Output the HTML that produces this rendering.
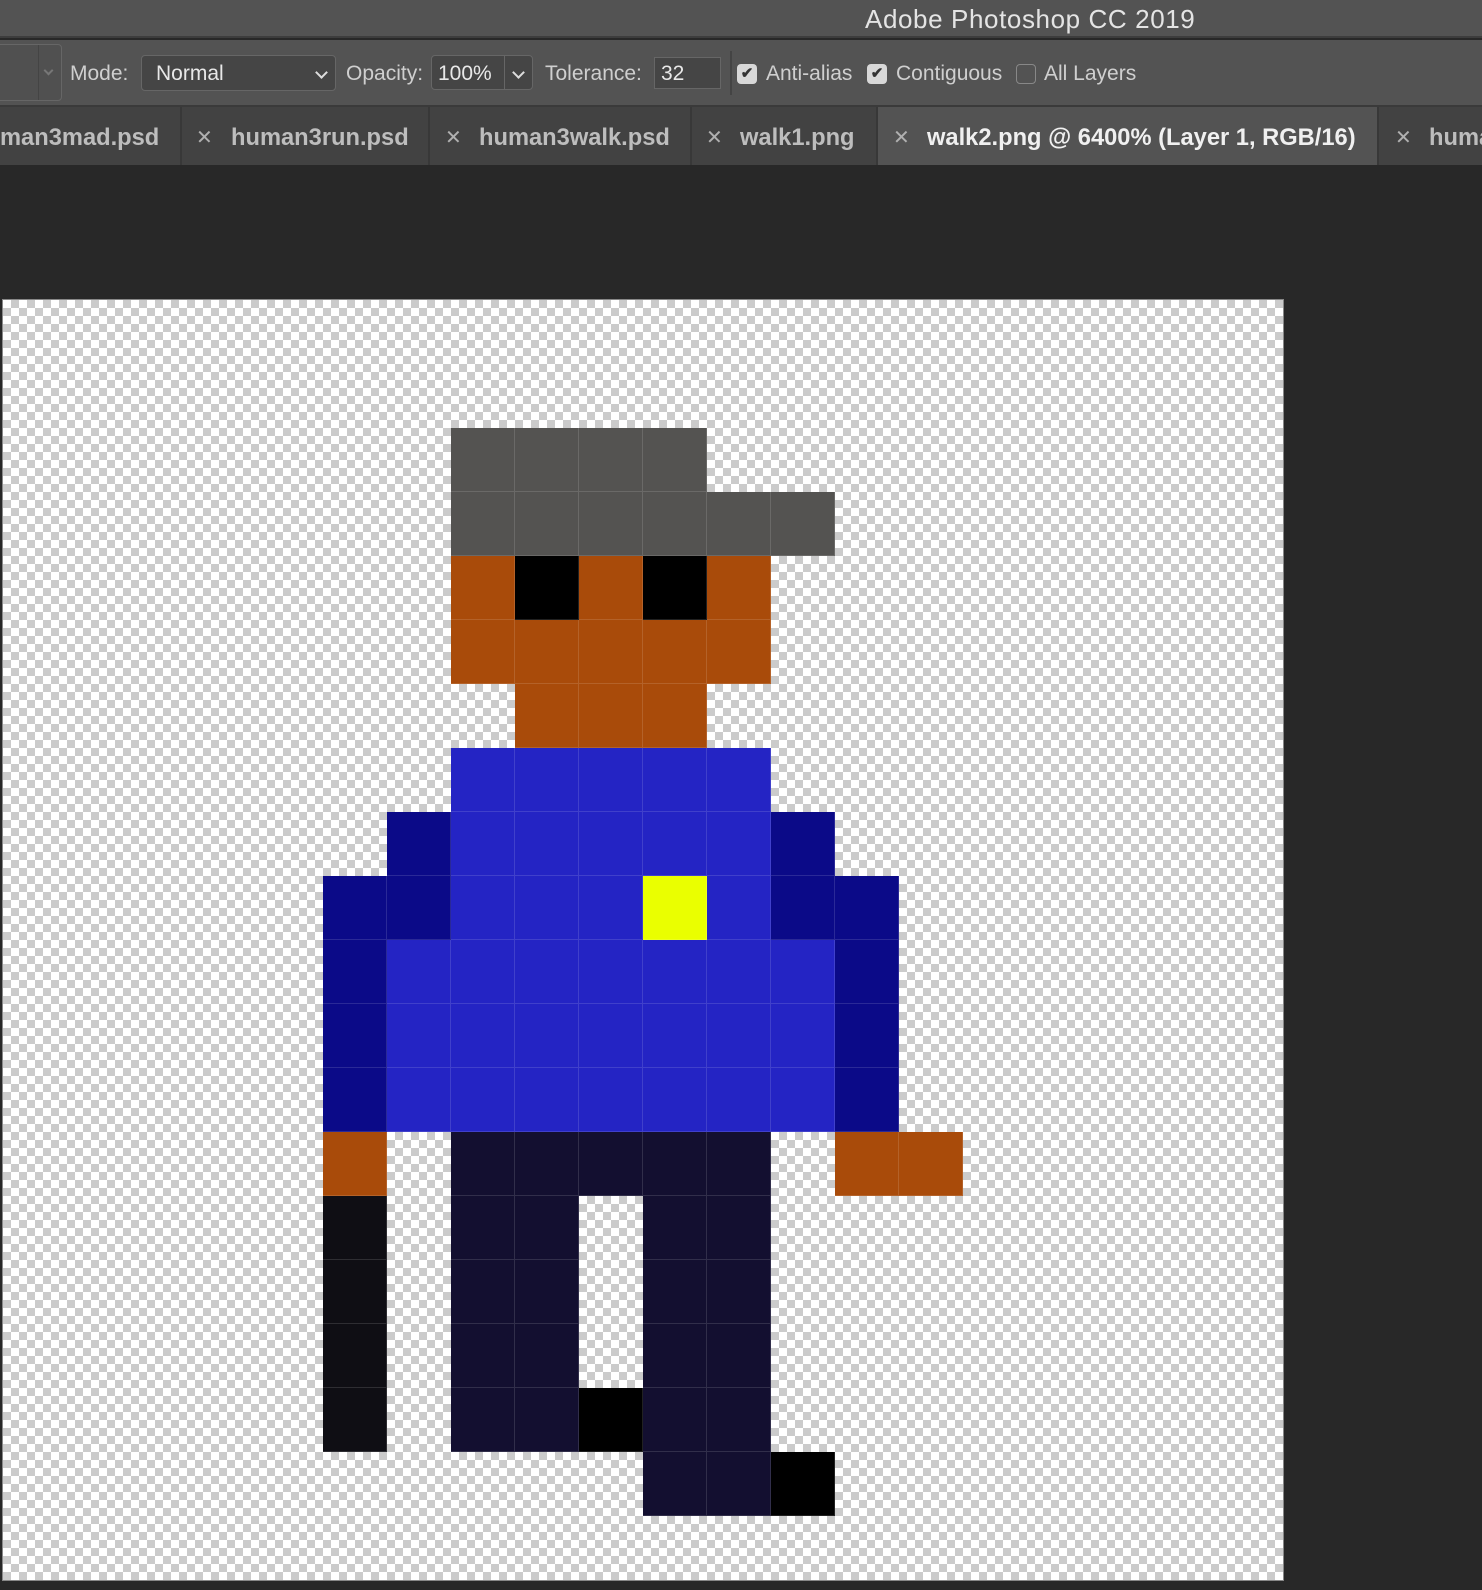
<!DOCTYPE html>
<html><head><meta charset="utf-8"><style>
*{margin:0;padding:0;box-sizing:border-box}
body{width:1482px;height:1590px;background:#282828;position:relative;overflow:hidden;font-family:"Liberation Sans",sans-serif;color:#d6d6d6}
.abs{position:absolute}
#title{left:0;top:0;width:1482px;height:38px;background:#535353;border-bottom:2px solid #3d3d3d}
#title span{position:absolute;left:865px;top:4px;font-size:26px;color:#e4e4e4;letter-spacing:0.6px}
#opts{left:0;top:40px;width:1482px;height:67px;background:#535353;border-bottom:2px solid #3a3a3a;font-size:21px;color:#cfcfcf}
.box{position:absolute;border:1.5px solid #666;border-radius:4px;background:#454545}
.lbl{position:absolute;top:22px;white-space:nowrap}
.arr{position:absolute;width:9px;height:9px;border-right:2px solid #ddd;border-bottom:2px solid #ddd;transform:rotate(45deg)}
.chk{position:absolute;top:24px;width:20px;height:20px;border-radius:4px;background:#d8d8d8;color:#333;font-size:15px;text-align:center;line-height:20px;font-weight:bold}
#tabs{left:0;top:107px;width:1482px;height:58px;background:#424242}
.tab{position:absolute;top:0;height:58px;border-right:2px solid #383838;font-size:23.7px;font-weight:bold;color:#bdbdbd}
.tab .x{position:absolute;top:18px;font-weight:normal;font-size:20px;color:#b0b0b0}
.tab .t{position:absolute;top:18px;white-space:nowrap}
#canvas{left:3px;top:300px;width:1280px;height:1280px;background-color:#fff;
background-image:conic-gradient(#cbcbcb 25%,transparent 0 50%,#cbcbcb 0 75%,transparent 0);background-size:16px 16px;
outline:1px solid #888}
.p{position:absolute;width:64px;height:64px;box-shadow:inset -1px -1px 0 rgba(255,255,255,.13)}
</style></head><body>
<div id="title" class="abs"><span>Adobe Photoshop CC 2019</span></div>
<div id="opts" class="abs">
  <div class="box" style="left:-4px;top:4px;width:66px;height:57px;background:#505050"></div>
  <div class="abs" style="left:38px;top:5px;width:1px;height:55px;background:#444"></div>
  <div class="arr" style="left:45px;top:27px;width:7px;height:7px;border-color:#777"></div>
  <div class="lbl" style="left:70px">Mode:</div>
  <div class="box" style="left:141px;top:15px;width:195px;height:36px"></div>
  <div class="lbl" style="left:156px;color:#e8e8e8">Normal</div>
  <div class="arr" style="left:317px;top:28px"></div>
  <div class="lbl" style="left:346px">Opacity:</div>
  <div class="box" style="left:431px;top:15px;width:102px;height:35px"></div>
  <div class="abs" style="left:504px;top:16px;width:1px;height:33px;background:#666"></div>
  <div class="lbl" style="left:438px;color:#e8e8e8">100%</div>
  <div class="arr" style="left:514px;top:28px"></div>
  <div class="lbl" style="left:545px">Tolerance:</div>
  <div class="box" style="left:654px;top:17px;width:67px;height:32px;border-radius:0;border-color:#666"></div>
  <div class="lbl" style="left:661px;color:#e8e8e8">32</div>
  <div class="abs" style="left:730px;top:11px;width:2px;height:44px;background:#444"></div>
  <div class="chk" style="left:737px">&#10004;</div>
  <div class="lbl" style="left:766px">Anti-alias</div>
  <div class="chk" style="left:867px">&#10004;</div>
  <div class="lbl" style="left:896px">Contiguous</div>
  <div class="chk" style="left:1016px;background:none;border:1.5px solid #888"></div>
  <div class="lbl" style="left:1044px">All Layers</div>
</div>
<div id="tabs" class="abs">
  <div class="tab" style="left:0;width:182px"><span class="t" style="left:0">man3mad.psd</span></div>
  <div class="tab" style="left:182px;width:248px"><span class="x" style="left:14px">✕</span><span class="t" style="left:49px">human3run.psd</span></div>
  <div class="tab" style="left:430px;width:262px"><span class="x" style="left:15px">✕</span><span class="t" style="left:49px">human3walk.psd</span></div>
  <div class="tab" style="left:692px;width:186px"><span class="x" style="left:14px">✕</span><span class="t" style="left:48px">walk1.png</span></div>
  <div class="tab" style="left:878px;width:501px;background:#535353;color:#f0f0f0"><span class="x" style="left:15px">✕</span><span class="t" style="left:49px">walk2.png @ 6400% (Layer 1, RGB/16)</span></div>
  <div class="tab" style="left:1380px;width:200px;border:none"><span class="x" style="left:15px">✕</span><span class="t" style="left:49px">huma</span></div>
</div>
<div id="canvas" class="abs"></div>
<script>
var C={g:'#545351',s:'#a94b0a',b:'#2424c4',d:'#0b0a88',y:'#eaff00',p:'#130f30',k:'#0f0e14',x:'#000'};
var rows={
2:'.......gggg',
3:'.......gggggg',
4:'.......sxsxs',
5:'.......sssss',
6:'........sss',
7:'.......bbbbb',
8:'......dbbbbbd',
9:'.....ddbbbybdd',
10:'.....dbbbbbbbd',
11:'.....dbbbbbbbd',
12:'.....dbbbbbbbd',
13:'.....s.ppppp.ss',
14:'.....k.pp.pp',
15:'.....k.pp.pp',
16:'.....k.pp.pp',
17:'.....k.ppxpp',
18:'..........ppx'};
var cv=document.getElementById('canvas'),h='';
for(var r in rows){var s=rows[r];for(var c=0;c<s.length;c++){if(s[c]!='.')h+='<div class="p" style="left:'+c*64+'px;top:'+r*64+'px;background:'+C[s[c]]+'"></div>';}}
cv.innerHTML=h;
</script>
</body></html>
